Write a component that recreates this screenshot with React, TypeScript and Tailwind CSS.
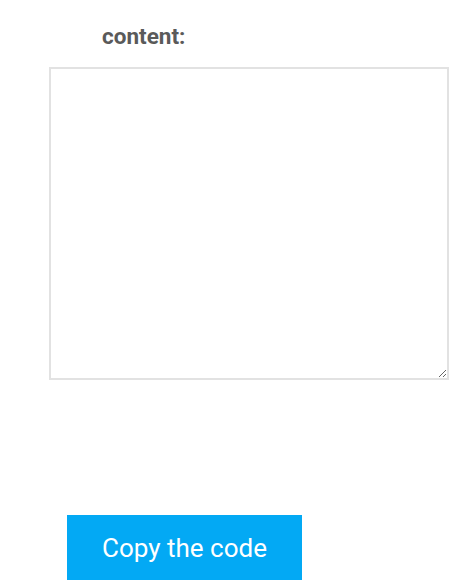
import React from 'react';

const App = () => {
  return (
    <div className="w-full min-h-[588px] bg-white font-['Roboto',sans-serif]">
      <div className="pt-[21px] pl-[102px]">
        <label className="text-[22.5px] font-bold leading-[30px] text-[#5a5a5a]">content:</label>
      </div>
      <div className="mt-[16px] pl-[49px]">
        <textarea className="block w-[400px] h-[313px] border-2 border-[#e2e2e2] bg-white outline-none resize" />
      </div>
      <div className="mt-[135px] pl-[67px]">
        <button className="w-[235px] h-[65px] bg-[#03a9f4] text-white text-[26px] leading-none">
          Copy the code
        </button>
      </div>
    </div>
  );
};

export default App;
